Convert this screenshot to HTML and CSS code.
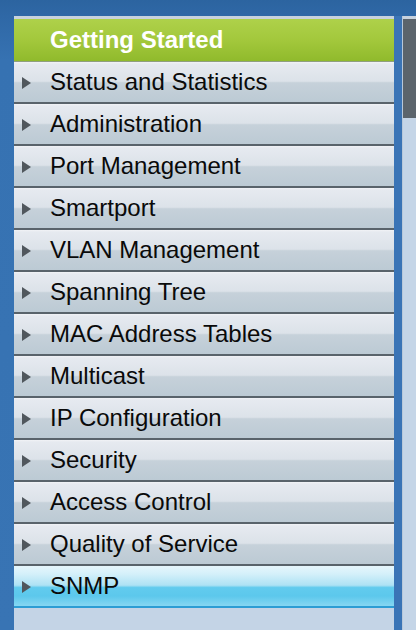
FILE: index.html
```html
<!DOCTYPE html>
<html>
<head>
<meta charset="utf-8">
<link rel="stylesheet" href="styles.css">
</head>
<body>
<div class="frame">
  <div class="left-strip"></div>
  <nav class="menu">
    <div class="menu-head">Getting Started</div>
    <div class="item"><span class="arrow"></span>Status and Statistics</div>
    <div class="item"><span class="arrow"></span>Administration</div>
    <div class="item"><span class="arrow"></span>Port Management</div>
    <div class="item"><span class="arrow"></span>Smartport</div>
    <div class="item"><span class="arrow"></span>VLAN Management</div>
    <div class="item"><span class="arrow"></span>Spanning Tree</div>
    <div class="item"><span class="arrow"></span>MAC Address Tables</div>
    <div class="item"><span class="arrow"></span>Multicast</div>
    <div class="item"><span class="arrow"></span>IP Configuration</div>
    <div class="item"><span class="arrow"></span>Security</div>
    <div class="item"><span class="arrow"></span>Access Control</div>
    <div class="item"><span class="arrow"></span>Quality of Service</div>
    <div class="item active"><span class="arrow"></span>SNMP</div>
    <div class="menu-fill"></div>
  </nav>
  <div class="divider"></div>
  <div class="scrollbar">
    <div class="scroll-cap"></div>
    <div class="scroll-thumb"></div>
    <div class="scroll-track"></div>
  </div>
</div>
</body>
</html>
```

FILE: styles.css
```css
html, body {
  margin: 0;
  padding: 0;
  height: 100%;
}
body {
  background: #3672b2;
  font-family: "Liberation Sans", Arial, sans-serif;
  overflow: hidden;
}
.frame {
  display: flex;
  height: 630px;
  padding-top: 16px;
  box-sizing: border-box;
  background: linear-gradient(to bottom, #2c64a0 0, #2f68a6 16px, #3672b2 60px, #3874b4 100%);
}
.left-strip {
  width: 14px;
  flex: none;
}
.menu {
  width: 380px;
  flex: none;
  display: flex;
  flex-direction: column;
  border-top: 3px solid #c7d2de;
  background: #c4d4e6;
}
.menu-head {
  height: 42px;
  border-bottom: 1px solid #8f9f80;
  background: linear-gradient(to bottom, #aed14a 0%, #a3c83c 50%, #90ba2c 100%);
  color: #fff;
  font-weight: bold;
  font-size: 24px;
  line-height: 42px;
  padding-left: 36px;
}
.item {
  height: 40px;
  border-bottom: 2px solid #59636b;
  background: linear-gradient(to bottom, #f1f3f6 0, #e6eaf0 2px, #dce2e9 48%, #c6d1da 52%, #bccad4 100%);
  color: #0a0a0a;
  font-size: 24px;
  line-height: 40px;
  display: flex;
  align-items: center;
  padding-left: 8px;
}
.arrow {
  width: 0;
  height: 0;
  border-top: 6px solid transparent;
  border-bottom: 6px solid transparent;
  border-left: 9px solid #50575d;
  margin-right: 19px;
  margin-top: 2px;
}
.item.active {
  border-bottom: 2px solid #2c9dd4;
  background: linear-gradient(to bottom, #e6f6fc 0, #d4f0fa 20%, #aee2f4 48%, #62cbee 54%, #5cc8ec 75%, #86d7f2 100%);
}
.menu-fill {
  flex: 1;
  background: #c4d4e6;
}
.divider {
  width: 8px;
  flex: none;
  background: #3a74b6;
}
.scrollbar {
  width: 13px;
  flex: none;
  border-left: 1px solid #b8c8da;
  display: flex;
  flex-direction: column;
}
.scroll-cap {
  height: 3px;
  background: #c7d2de;
}
.scroll-thumb {
  height: 99px;
  background: #5b646c;
}
.scroll-track {
  flex: 1;
  background: #c5d5e7;
}
```
